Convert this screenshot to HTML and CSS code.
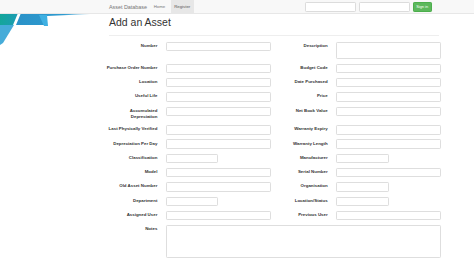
FILE: index.html
```html
<!doctype html>
<html lang="en">
<head>
  <meta charset="UTF-8">
  <title>Add an Asset</title>
  <link rel="stylesheet" href="styles.css">
</head>
<body>
  <svg class="bg-shape" width="120" height="50" viewBox="0 0 120 50">
    <defs>
      <linearGradient id="teal" x1="0" y1="0" x2="1" y2="0">
        <stop offset="0" stop-color="#14a69a"/>
        <stop offset="1" stop-color="#1c9cb4"/>
      </linearGradient>
      <linearGradient id="band" x1="0" y1="0" x2="1" y2="0">
        <stop offset="0" stop-color="#2a92c8"/>
        <stop offset="0.5" stop-color="#2f9bd0"/>
        <stop offset="1" stop-color="#bfe0f0" stop-opacity="0.3"/>
      </linearGradient>
    </defs>
    <polygon points="0,13 18,13 13,25 0,25" fill="url(#teal)"/>
    <polygon points="0,25 14,25 3,43 0,45" fill="#46acd9"/>
    <polygon points="21,13 112,13 47,16 45,25 16,25" fill="url(#band)"/>
    <polygon points="39,15 47,15 48,26 44,26" fill="#3fb0e2"/>
  </svg>

  <div class="navbar">
    <span class="brand">Asset Database</span>
    <a class="nav-link" href="#">Home</a>
    <a class="nav-link active" href="#">Register</a>
    <div class="nav-form">
      <input class="nav-input" type="text">
      <input class="nav-input" type="password">
      <button class="btn-signin">Sign in</button>
    </div>
  </div>

  <div class="page">
    <div class="page-header">
      <h1>Add an Asset</h1>
    </div>

    <form class="asset-form">
      <label>Number</label>
      <div><input type="text"></div>
      <label>Description</label>
      <div><textarea class="desc"></textarea></div>

      <label>Purchase Order Number</label>
      <div><input type="text"></div>
      <label>Budget Code</label>
      <div><input type="text"></div>

      <label>Location</label>
      <div><input type="text"></div>
      <label>Date Purchased</label>
      <div><input type="text"></div>

      <label>Useful Life</label>
      <div><input type="text"></div>
      <label>Price</label>
      <div><input type="text"></div>

      <label class="wrap">Accumulated Depreciation</label>
      <div><input type="text"></div>
      <label>Net Book Value</label>
      <div><input type="text"></div>

      <label>Last Physically Verified</label>
      <div><input type="text"></div>
      <label>Warranty Expiry</label>
      <div><input type="text"></div>

      <label>Depreciation Per Day</label>
      <div><input type="text"></div>
      <label>Warranty Length</label>
      <div><input type="text"></div>

      <label>Classification</label>
      <div><input class="short" type="text"></div>
      <label>Manufacturer</label>
      <div><input class="short" type="text"></div>

      <label>Model</label>
      <div><input type="text"></div>
      <label>Serial Number</label>
      <div><input type="text"></div>

      <label>Old Asset Number</label>
      <div><input type="text"></div>
      <label>Organisation</label>
      <div><input class="short" type="text"></div>

      <label>Department</label>
      <div><input class="short" type="text"></div>
      <label>Location/Status</label>
      <div><input class="short" type="text"></div>

      <label>Assigned User</label>
      <div><input type="text"></div>
      <label>Previous User</label>
      <div><input type="text"></div>

      <label>Notes</label>
      <div class="notes-cell"><textarea class="notes"></textarea></div>
    </form>
  </div>
</body>
</html>
```

FILE: styles.css
```css
body {
    margin: 0;
    font-family: "Liberation Sans", Arial, sans-serif;
    color: #333;
    background: #fff;
}

.bg-shape {
    position: absolute;
    top: 0;
    left: 0;
    z-index: 0;
}

.navbar {
    position: relative;
    z-index: 1;
    display: flex;
    align-items: center;
    height: 13px;
    background: #f8f8f8;
    border-bottom: 1px solid #e7e7e7;
    padding-left: 109px;
    padding-right: 42.3px;
}

.brand {
    font-size: 5.4px;
    color: #777;
    margin-right: 3.3px;
}

.nav-link {
    display: flex;
    align-items: center;
    height: 13px;
    padding: 0 3.3px;
    margin-right: 2.5px;
    font-size: 4.3px;
    color: #777;
    text-decoration: none;
}

.nav-link.active {
    background: #e7e7e7;
    color: #555;
}

.nav-form {
    margin-left: auto;
    display: flex;
    align-items: center;
    gap: 2.7px;
}

.nav-input {
    box-sizing: border-box;
    width: 51px;
    height: 10px;
    margin: 0;
    padding: 0;
    border: 1px solid #dcdcdc;
    border-radius: 1.2px;
    background: #fff;
}

.btn-signin {
    box-sizing: border-box;
    width: 19px;
    height: 10px;
    margin: 0;
    padding: 0;
    border: 1px solid #4cae4c;
    border-radius: 1.2px;
    background: #5cb85c;
    color: #fff;
    font-family: "Liberation Sans", Arial, sans-serif;
    font-size: 3.9px;
}

.page {
    position: relative;
    z-index: 1;
    padding-left: 105.7px;
}

.page-header {
    margin-left: 3.3px;
    width: 330px;
    border-bottom: 1px solid #eee;
    padding-bottom: 7px;
}

.page-header h1 {
    margin: 2.5px 0 0;
    font-size: 10.5px;
    font-weight: normal;
    line-height: 1.1;
    color: #333;
}

.asset-form {
    display: grid;
    grid-template-columns: 60px 105px 65.3px 105.3px;
    row-gap: 4.9px;
    margin-top: 5.5px;
}

.asset-form label {
    box-sizing: border-box;
    padding: 1.1px 8.3px 0 0;
    font-size: 4.4px;
    font-weight: bold;
    line-height: 6.3px;
    text-align: right;
    color: #333;
}

.asset-form label.wrap {
    padding-left: 12px;
}

.asset-form input,
.asset-form textarea {
    display: block;
    box-sizing: border-box;
    width: 100%;
    height: 9.4px;
    margin: 0;
    padding: 0;
    border: 1px solid #dedede;
    border-radius: 1.2px;
    background: #fff;
    resize: none;
}

.asset-form input.short {
    width: 52.6px;
}

.asset-form textarea.desc {
    height: 17.3px;
}

.notes-cell {
    grid-column: 2 / 5;
}

.asset-form textarea.notes {
    height: 32.7px;
}
```
